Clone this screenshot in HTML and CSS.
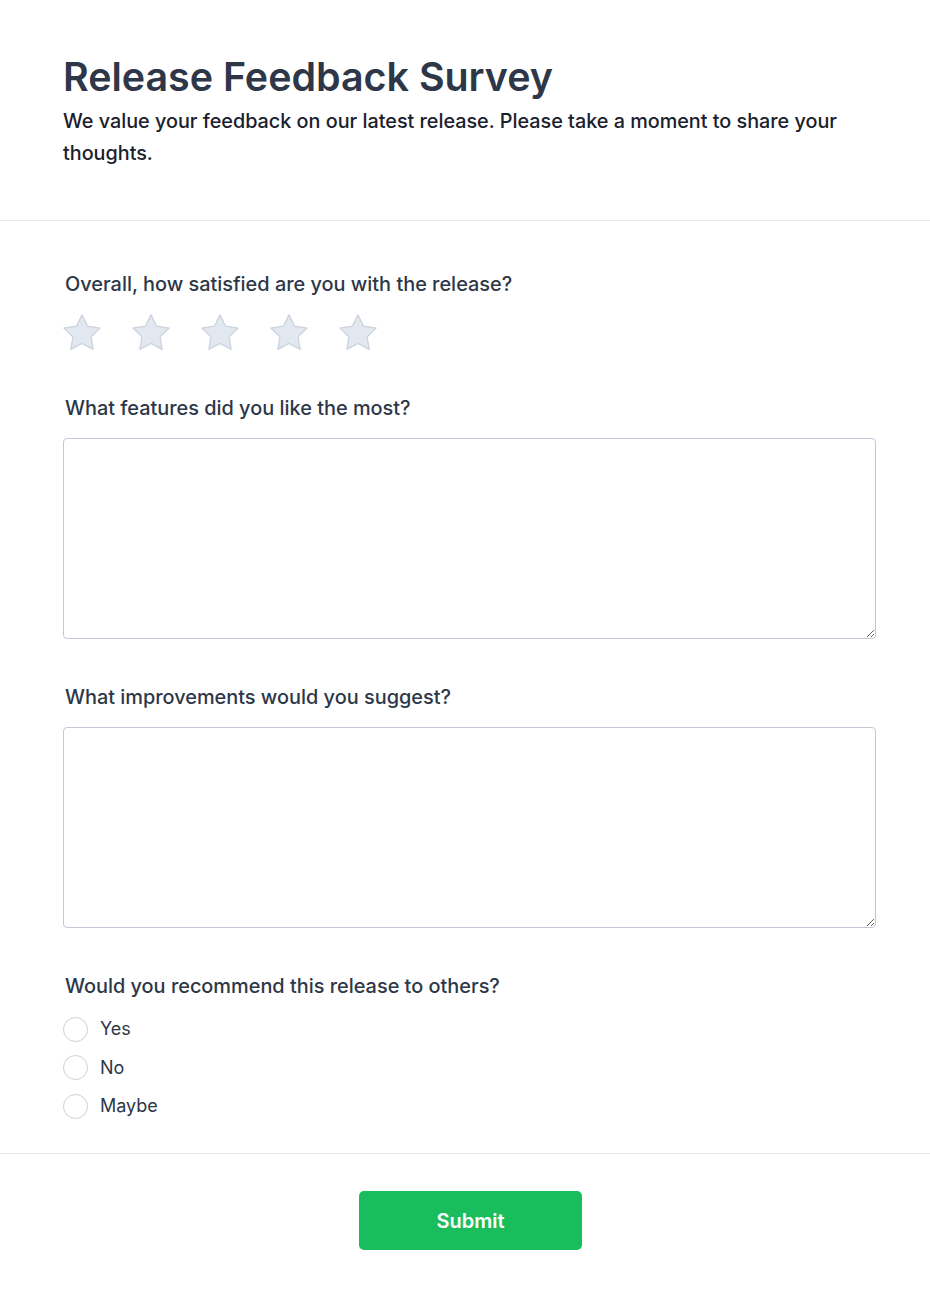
FILE: index.html
```html
<!DOCTYPE html>
<html lang="en">
<head>
<meta charset="utf-8">
<title>Release Feedback Survey</title>
<link rel="stylesheet" href="styles.css">
</head>
<body>
<div class="survey">
  <header class="survey-header">
    <h1 class="title">Release Feedback Survey</h1>
    <p class="subtitle">We value your feedback on our latest release. Please take a moment to share your thoughts.</p>
  </header>
  <form class="survey-body">
    <div class="question q-rating">
      <label class="q-label">Overall, how satisfied are you with the release?</label>
      <div class="stars">
        <svg class="star" viewBox="1.5 1.5 21 21"><path d="M12 2l3.09 6.26L22 9.27l-5 4.87 1.18 6.880L12 17.77l-6.18 3.25L7 14.14 2 9.27l6.91-1.01L12 2z"/></svg>
        <svg class="star" viewBox="1.5 1.5 21 21"><path d="M12 2l3.09 6.26L22 9.27l-5 4.87 1.18 6.88L12 17.77l-6.18 3.25L7 14.14 2 9.27l6.91-1.01L12 2z"/></svg>
        <svg class="star" viewBox="1.5 1.5 21 21"><path d="M12 2l3.09 6.26L22 9.27l-5 4.87 1.18 6.88L12 17.77l-6.18 3.25L7 14.14 2 9.27l6.91-1.01L12 2z"/></svg>
        <svg class="star" viewBox="1.5 1.5 21 21"><path d="M12 2l3.09 6.26L22 9.27l-5 4.87 1.18 6.88L12 17.77l-6.18 3.25L7 14.14 2 9.27l6.91-1.01L12 2z"/></svg>
        <svg class="star" viewBox="1.5 1.5 21 21"><path d="M12 2l3.09 6.26L22 9.27l-5 4.87 1.18 6.88L12 17.77l-6.18 3.25L7 14.14 2 9.27l6.91-1.01L12 2z"/></svg>
      </div>
    </div>
    <div class="question q-text">
      <label class="q-label">What features did you like the most?</label>
      <textarea class="answer"></textarea>
    </div>
    <div class="question q-text">
      <label class="q-label">What improvements would you suggest?</label>
      <textarea class="answer"></textarea>
    </div>
    <div class="question q-radio">
      <label class="q-label">Would you recommend this release to others?</label>
      <div class="options">
        <label class="option"><span class="radio"></span><span class="option-text">Yes</span></label>
        <label class="option"><span class="radio"></span><span class="option-text">No</span></label>
        <label class="option"><span class="radio"></span><span class="option-text">Maybe</span></label>
      </div>
    </div>
  </form>
  <footer class="survey-footer">
    <button class="submit" type="button">Submit</button>
  </footer>
</div>
</body>
</html>
```
FILE: styles.css
```css
* { box-sizing: border-box; }
html, body { margin: 0; padding: 0; background: #ffffff; }
body {
  font-family: Inter, "Noto Sans", "Liberation Sans", sans-serif;
  color: #2d3748;
}
.survey { width: 930px; }
.survey-header {
  padding: 53px 54px 51px 63px;
  border-bottom: 1px solid #e2e8f0;
}
.title {
  margin: 0 0 4px 0;
  font-size: 39.4px;
  line-height: 48px;
  font-weight: 600;
  color: #2d3748;
}
.subtitle {
  margin: 0;
  font-size: 19.8px;
  line-height: 32px;
  font-weight: 500;
  color: #1a202c;
}
.survey-body {
  padding: 49px 54px 35px 63px;
  display: flex;
  flex-direction: column;
  border-bottom: 1px solid #e2e8f0;
}
.question { display: flex; flex-direction: column; }
.q-label {
  display: block;
  padding-left: 2px;
  font-size: 19.9px;
  line-height: 28px;
  font-weight: 500;
  color: #2d3748;
}
.q-rating { margin-bottom: 42px; }
.stars {
  margin-top: 16px;
  display: flex;
  gap: 31px;
  height: 38px;
}
.star {
  width: 38px;
  height: 38px;
  fill: #e2e8f0;
  stroke: #cbd2dd;
  stroke-width: 0.7;
  stroke-linejoin: round;
}
.q-text { margin-bottom: 44.5px; }
.answer {
  margin-top: 15.5px;
  width: 100%;
  height: 201px;
  border: 1px solid #c3c8d6;
  border-radius: 4px;
  resize: vertical;
  font-family: inherit;
  font-size: 16px;
  padding: 8px 12px;
  background: #fff;
}
.options {
  margin-top: 17px;
  display: flex;
  flex-direction: column;
  gap: 14.5px;
}
.option {
  display: flex;
  align-items: center;
  height: 24px;
}
.radio {
  width: 25px;
  height: 25px;
  border: 1.5px solid #cbd0db;
  border-radius: 50%;
  background: #fff;
  flex: none;
}
.option-text {
  margin-left: 12px;
  font-size: 18px;
  line-height: 24px;
  font-weight: 400;
  color: #2d3748;
}
.survey-footer {
  padding: 37px 53px 50px 64px;
  display: flex;
  justify-content: center;
}
.submit {
  width: 223px;
  height: 59px;
  border: none;
  border-radius: 5px;
  background: #1abd5b;
  color: #ffffff;
  font-family: inherit;
  font-size: 20px;
  font-weight: 600;
  cursor: pointer;
}
```
